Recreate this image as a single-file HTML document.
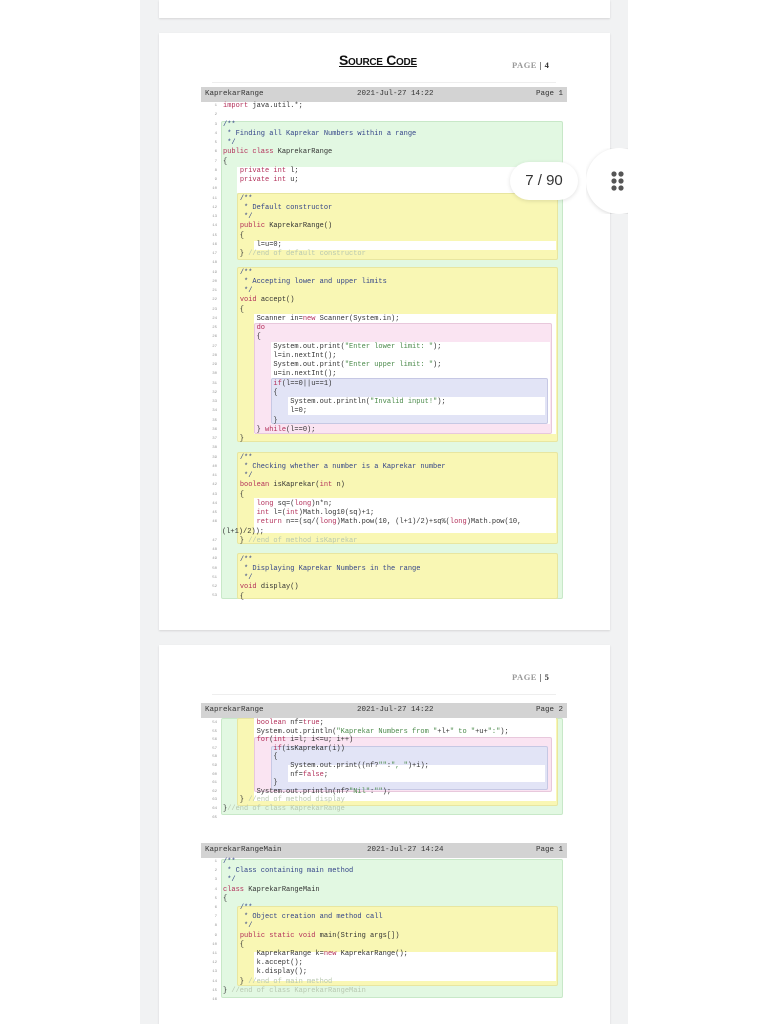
<!DOCTYPE html>
<html><head><meta charset="utf-8"><style>
*{margin:0;padding:0;box-sizing:border-box}
html,body{width:768px;height:1024px;overflow:hidden}
body{background:#fff;position:relative;font-family:"Liberation Sans",sans-serif}
.a{position:absolute}
.col{left:140px;top:0;width:488px;height:1024px;background:#f1f2f3}
.pg{left:159px;width:451px;background:#fff;box-shadow:0 1px 2px rgba(0,0,0,.12)}
.hb{position:absolute;left:201px;width:366px;height:15px;background:#d3d3d3;font:7.5px/15px "Liberation Mono",monospace;color:#333}
.hb span{position:absolute;top:0}
pre{position:absolute;font:7px/9.25px "Liberation Mono",monospace;color:#333;white-space:pre}
.ln{font-size:4px;color:#999;text-align:right;width:10px}
.k{color:#b3305a}.c{color:#334488}.e{color:#b8c8b0}.s{color:#4a8a4a}
.g{background:#e2f8e2;border:1px solid #c8e8c8;border-radius:2px}
.y{background:#f9f7b4;border:1px solid #e8e6a0;border-radius:2px}
.w{background:#fff}
.p{background:#fae4f2;border:1px solid #e8c8dc;border-radius:2px}
.b{background:#e2e4f6;border:1px solid #c6c8e4;border-radius:2px}
.rule{height:1px;background:#eee}
.pgn{font:bold 8.5px "Liberation Serif",serif;color:#999;letter-spacing:.5px}
.pgn b{color:#333}
</style></head><body>
<div class="a col"></div>
<div class="a pg" style="top:0;height:18px"></div>
<div class="a pg" style="top:33px;height:597px"></div>
<div class="a pg" style="top:645px;height:379px"></div>

<div class="a" style="left:339px;top:52px;font:bold 14px 'Liberation Sans',sans-serif;color:#111;text-decoration:underline;font-variant:small-caps;letter-spacing:-.3px">Source Code</div>
<div class="a pgn" style="left:512px;top:60px">PAGE <b>| 4</b></div>
<div class="a rule" style="left:212px;top:82px;width:344px"></div>

<div class="hb" style="top:87px"><span style="left:4px">KaprekarRange</span><span style="left:156px">2021-Jul-27 14:22</span><span style="right:4px">Page 1</span></div>

<div class="a g" style="left:221px;top:121px;width:342px;height:478px"></div>
<div class="a w" style="left:237px;top:167px;width:323px;height:26px"></div>
<div class="a y" style="left:237px;top:193px;width:321px;height:67px"></div>
<div class="a w" style="left:254px;top:241px;width:302px;height:9px"></div>
<div class="a y" style="left:237px;top:267px;width:321px;height:175px"></div>
<div class="a w" style="left:254px;top:314px;width:302px;height:120px"></div>
<div class="a p" style="left:254px;top:323px;width:298px;height:111px"></div>
<div class="a w" style="left:271px;top:342px;width:279px;height:82px"></div>
<div class="a b" style="left:271px;top:378px;width:277px;height:46px"></div>
<div class="a w" style="left:288px;top:397px;width:257px;height:18px"></div>
<div class="a y" style="left:237px;top:452px;width:321px;height:92px"></div>
<div class="a w" style="left:254px;top:498px;width:302px;height:35px"></div>
<div class="a y" style="left:237px;top:553px;width:321px;height:46px"></div>

<pre class="ln" style="left:207px;top:102px">1
2
3
4
5
6
7
8
9
10
11
12
13
14
15
16
17
18
19
20
21
22
23
24
25
26
27
28
29
30
31
32
33
34
35
36
37
38
39
40
41
42
43
44
45
46

47
48
49
50
51
52
53</pre>
<pre style="left:223px;top:102px"><span class="k">import</span> java.util.*;

<span class="c">/**
 * Finding all Kaprekar Numbers within a range
 */</span>
<span class="k">public class</span> KaprekarRange
{
    <span class="k">private int</span> l;
    <span class="k">private int</span> u;

    <span class="c">/**
     * Default constructor
     */</span>
    <span class="k">public</span> KaprekarRange()
    {
        l=u=0;
    } <span class="e">//end of default constructor</span>

    <span class="c">/**
     * Accepting lower and upper limits
     */</span>
    <span class="k">void</span> accept()
    {
        Scanner in=<span class="k">new</span> Scanner(System.in);
        <span class="k">do</span>
        {
            System.out.print(<span class="s">"Enter lower limit: "</span>);
            l=in.nextInt();
            System.out.print(<span class="s">"Enter upper limit: "</span>);
            u=in.nextInt();
            <span class="k">if</span>(l==0||u==1)
            {
                System.out.println(<span class="s">"Invalid input!"</span>);
                l=0;
            }
        } <span class="k">while</span>(l==0);
    }

    <span class="c">/**
     * Checking whether a number is a Kaprekar number
     */</span>
    <span class="k">boolean</span> isKaprekar(<span class="k">int</span> n)
    {
        <span class="k">long</span> sq=(<span class="k">long</span>)n*n;
        <span class="k">int</span> l=(<span class="k">int</span>)Math.log10(sq)+1;
        <span class="k">return</span> n==(sq/(<span class="k">long</span>)Math.pow(10, (l+1)/2)+sq%(<span class="k">long</span>)Math.pow(10,
</pre>
<pre style="left:222px;top:528px">(l+1)/2));</pre>
<pre style="left:223px;top:537px">    } <span class="e">//end of method isKaprekar</span>

    <span class="c">/**
     * Displaying Kaprekar Numbers in the range
     */</span>
    <span class="k">void</span> display()
    {</pre>

<div class="a pgn" style="left:512px;top:672px">PAGE <b>| 5</b></div>
<div class="a rule" style="left:212px;top:694px;width:344px"></div>
<div class="hb" style="top:703px"><span style="left:4px">KaprekarRange</span><span style="left:156px">2021-Jul-27 14:22</span><span style="right:4px">Page 2</span></div>
<div class="a g" style="left:221px;top:718px;width:342px;height:97px"></div>
<div class="a y" style="left:237px;top:718px;width:321px;height:88px"></div>
<div class="a w" style="left:254px;top:718px;width:302px;height:83px"></div>
<div class="a p" style="left:254px;top:737px;width:298px;height:55px"></div>
<div class="a b" style="left:271px;top:746px;width:277px;height:44px"></div>
<div class="a w" style="left:288px;top:765px;width:257px;height:17px"></div>
<pre class="ln" style="left:207px;top:719px;line-height:8.6px">54
55
56
57
58
59
60
61
62
63
64
65</pre>
<pre style="left:223px;top:719px;line-height:8.6px">        <span class="k">boolean</span> nf=<span class="k">true</span>;
        System.out.println(<span class="s">"Kaprekar Numbers from "</span>+l+<span class="s">" to "</span>+u+<span class="s">":"</span>);
        <span class="k">for</span>(<span class="k">int</span> i=l; i<=u; i++)
            <span class="k">if</span>(isKaprekar(i))
            {
                System.out.print((nf?<span class="s">""</span>:<span class="s">", "</span>)+i);
                nf=<span class="k">false</span>;
            }
        System.out.println(nf?<span class="s">"Nil"</span>:<span class="s">""</span>);
    } <span class="e">//end of method display</span>
}<span class="e">//end of class KaprekarRange</span>
</pre>

<div class="hb" style="top:843px"><span style="left:4px">KaprekarRangeMain</span><span style="left:166px">2021-Jul-27 14:24</span><span style="right:4px">Page 1</span></div>
<div class="a g" style="left:221px;top:859px;width:342px;height:139px"></div>
<div class="a y" style="left:237px;top:906px;width:321px;height:80px"></div>
<div class="a w" style="left:254px;top:952px;width:302px;height:29px"></div>
<pre class="ln" style="left:207px;top:858px;line-height:9.2px">1
2
3
4
5
6
7
8
9
10
11
12
13
14
15
16</pre>
<pre style="left:223px;top:858px;line-height:9.2px"><span class="c">/**
 * Class containing main method
 */</span>
<span class="k">class</span> KaprekarRangeMain
{
    <span class="c">/**
     * Object creation and method call
     */</span>
    <span class="k">public static void</span> main(String args[])
    {
        KaprekarRange k=<span class="k">new</span> KaprekarRange();
        k.accept();
        k.display();
    } <span class="e">//end of main method</span>
} <span class="e">//end of class KaprekarRangeMain</span>
</pre>

<div class="a" style="left:510px;top:162px;width:68px;height:38px;border-radius:19px;background:#fff;box-shadow:0 1px 4px rgba(0,0,0,.12);font:15px/38px 'Liberation Sans',sans-serif;color:#333;text-align:center">7 / 90</div>
<div class="a" style="left:586px;top:148px;width:42px;height:66px;overflow:hidden">
<div class="a" style="left:0;top:0;width:66px;height:66px;border-radius:33px;background:#fff;box-shadow:0 1px 4px rgba(0,0,0,.15)"></div>
<svg class="a" style="left:24px;top:22px" width="18" height="22"><g fill="#555"><circle cx="4" cy="4" r="2.6"/><circle cx="11" cy="4" r="2.6"/><circle cx="4" cy="11" r="2.6"/><circle cx="11" cy="11" r="2.6"/><circle cx="4" cy="18" r="2.6"/><circle cx="11" cy="18" r="2.6"/></g></svg>
</div>
</body></html>
